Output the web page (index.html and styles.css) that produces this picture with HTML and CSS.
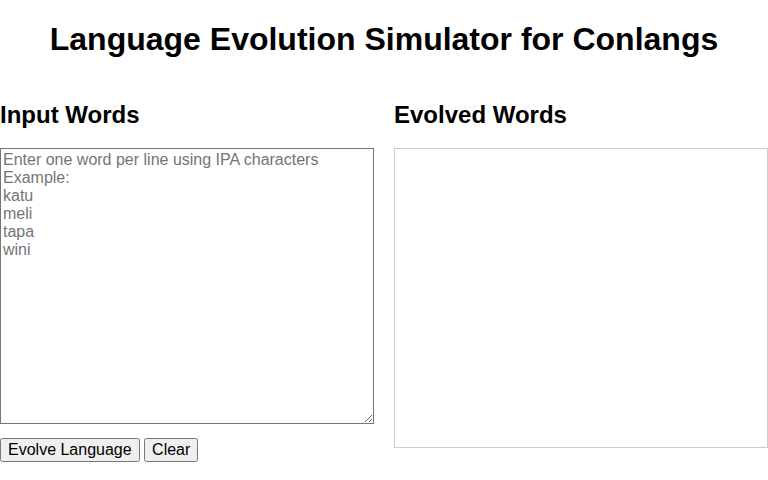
FILE: index.html
```html
<!DOCTYPE html>
<html lang="en">

<head>
 <meta charset="UTF-8">
 <meta name="viewport" content="width=device-width, initial-scale=1.0">
 <title>Language Evolution Simulator for Conlangs</title>
 <link rel="stylesheet" href="styles.css">
</head>

<body>
 <h1 class="title">Language Evolution Simulator for Conlangs</h1>
 <div class="container">
  <!-- Input -->
  <div class="column">
   <h2>Input Words</h2>
   <textarea id="input-words" rows="15" placeholder="Enter one word per line using IPA characters
Example:
katu
meli
tapa
wini"></textarea>
   <div class="buttons">
    <button id="evolve">Evolve Language</button>
    <button id="clear">Clear</button>
   </div>
  </div>
  <!-- Output -->
  <div class="column">
   <h2>Evolved Words</h2>
   <div id="output" class="output"></div>
  </div>
 </div>
</body>

</html>
```

FILE: styles.css
```css
body {
 margin: 0;
 font-family: "Liberation Sans", Arial, sans-serif;
 color: #000;
 background-color: #fff;
}

.title {
 text-align: center;
 font-size: 32px;
 margin: 0.67em 0;
}

.container {
 display: flex;
 gap: 20px;
}

.column {
 flex: 1;
 display: flex;
 flex-direction: column;
 min-width: 0;
}

.column h2 {
 font-size: 24px;
 margin: 20px 0 19px;
 padding-top: 1px;
}

textarea {
 box-sizing: border-box;
 width: 100%;
 height: 276px;
 padding: 2px;
 font-family: "Liberation Sans", Arial, sans-serif;
 font-size: 16px;
 line-height: 18px;
 border: 1px solid #767676;
}

.buttons {
 margin-top: 14px;
}

.buttons button {
 font-family: "Liberation Sans", Arial, sans-serif;
 font-size: 16px;
 height: 24px;
 padding: 1px 6px;
}

.output {
 box-sizing: border-box;
 height: 300px;
 border: 1px solid #ccc;
 padding: 10px;
 overflow-y: auto;
}
```
